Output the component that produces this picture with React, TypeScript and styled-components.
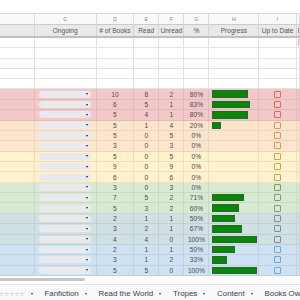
import React from 'react';
import styled, { createGlobalStyle } from 'styled-components';

const COLS = '34.5px 62.3px 37.3px 25.3px 25px 25px 50px 37.4px 1fr';
const EMPTY_LINE = '#e2e3e3';
const DATA_LINE = 'rgba(0, 0, 0, 0.07)';

type Group = { bg: string; box: string; rows: [number, number][] };

const groups: Group[] = [
	{ bg: '#f3c8c9', box: '#d86a6a', rows: [[10, 8], [6, 5], [5, 4]] },
	{ bg: '#fce5cd', box: '#d39a64', rows: [[5, 1], [5, 0], [3, 0]] },
	{ bg: '#fff2cc', box: '#c9a64a', rows: [[5, 0], [9, 0], [6, 0]] },
	{ bg: '#d9ead3', box: '#7f9c71', rows: [[3, 0], [7, 5], [5, 3]] },
	{ bg: '#d0e0e3', box: '#7b8d95', rows: [[2, 1], [3, 2], [4, 4]] },
	{ bg: '#cfe2f3', box: '#72a4d8', rows: [[2, 1], [3, 1], [5, 5]] },
];

const letters = ['', 'C', 'D', 'E', 'F', 'G', 'H', 'I', ''];
const headers = ['', 'Ongoing', '# of Books', 'Read', 'Unread', '%', 'Progress', 'Up to Date', 'B'];
const tabs = ['Fanfiction', 'Read the World', 'Tropes', 'Content', 'Books Owned'];

const BAR_MAX = 45.6;

const App: React.FC = () => (
	<>
		<GlobalStyle />
		<Sheet>
			<TopGap />
			<Row $h={11.5}>
				{letters.map((l, i) => (
					<LetterCell key={i}>{l}</LetterCell>
				))}
			</Row>
			<Row $h={11} $bg="#e9e9e9">
				{headers.map((h, i) => (
					<HeaderCell key={i} $left={i === 8}>
						{h}
					</HeaderCell>
				))}
			</Row>
			<FrozenLine />
			{[0, 1, 2, 3, 4].map((r) => (
				<Row key={r} $h={10.3}>
					{letters.map((_, i) => (
						<Cell key={i} $line={EMPTY_LINE}>
							{r === 0 && i === 8 && <PinkMark />}
						</Cell>
					))}
				</Row>
			))}
			{groups.map((g) =>
				g.rows.map(([total, read], r) => {
					const pct = Math.round((read / total) * 100);
					return (
						<Row key={`${g.bg}-${r}`} $h={10.37} $bg={g.bg}>
							<Cell $line={DATA_LINE} />
							<Cell $line={DATA_LINE}>
								<Chip>
									<Caret />
								</Chip>
							</Cell>
							<Cell $line={DATA_LINE}>{total}</Cell>
							<Cell $line={DATA_LINE}>{read}</Cell>
							<Cell $line={DATA_LINE}>{total - read}</Cell>
							<Cell $line={DATA_LINE}>{pct}%</Cell>
							<BarCell $line={DATA_LINE}>
								{pct > 0 && <Bar style={{ width: `${(pct / 100) * BAR_MAX}px` }} />}
							</BarCell>
							<Cell $line={DATA_LINE}>
								<CheckBox $color={g.box} />
							</Cell>
							<Cell $line={DATA_LINE} />
						</Row>
					);
				}),
			)}
			<ScrollArea>
				<Thumb />
			</ScrollArea>
			<TabBar>
				<StarTab>
					<Stars>☆☆☆☆☆</Stars>
					<TabCaret />
				</StarTab>
				{tabs.map((t) => (
					<Tab key={t}>
						{t}
						<TabCaret />
					</Tab>
				))}
			</TabBar>
		</Sheet>
	</>
);

export default App;

/**
 * Styled components
 */

const GlobalStyle = createGlobalStyle`
	html, body {
		margin: 0;
		padding: 0;
		background: #fff;
	}
	body {
		width: 300px;
		height: 300px;
		overflow: hidden;
		font-family: "Liberation Sans", Arial, sans-serif;
	}
`;

const Sheet = styled.div`
	width: 300px;
	height: 300px;
	display: flex;
	flex-direction: column;
	overflow: hidden;
	background: #fff;
`;

const TopGap = styled.div`
	flex: none;
	height: 13.5px;
	box-sizing: border-box;
	border-bottom: 1px solid #dadce0;
`;

const Row = styled.div<{ $h: number; $bg?: string }>`
	flex: none;
	display: grid;
	grid-template-columns: ${COLS};
	height: ${(p) => p.$h}px;
	background: ${(p) => p.$bg ?? '#fff'};
`;

const Cell = styled.div<{ $line: string }>`
	box-sizing: border-box;
	display: flex;
	align-items: center;
	justify-content: center;
	overflow: hidden;
	white-space: nowrap;
	border-right: 1px solid ${(p) => p.$line};
	border-bottom: 1px solid ${(p) => p.$line};
	font-size: 6.6px;
	color: #4a4a4a;
`;

const LetterCell = styled.div`
	box-sizing: border-box;
	display: flex;
	align-items: center;
	justify-content: center;
	background: #f8f9fa;
	border-right: 1px solid #dadce0;
	border-bottom: 1px solid #c9cacc;
	font-size: 5.4px;
	color: #80868b;
`;

const HeaderCell = styled.div<{ $left?: boolean }>`
	box-sizing: border-box;
	display: flex;
	align-items: center;
	justify-content: ${(p) => (p.$left ? 'flex-start' : 'center')};
	padding-left: ${(p) => (p.$left ? '1px' : '0')};
	overflow: hidden;
	white-space: nowrap;
	border-right: 1px solid #d4d4d4;
	font-size: 6.6px;
	color: #555;
`;

const FrozenLine = styled.div`
	flex: none;
	height: 2px;
	background: #bfbfbf;
	box-shadow: 0 0.5px 0 #dcdcdc;
`;

const PinkMark = styled.span`
	width: 4px;
	height: 7px;
	margin-left: 1px;
	background: #e8b4b4;
`;

const Chip = styled.span`
	box-sizing: border-box;
	width: 52.4px;
	height: 7px;
	border-radius: 3.5px;
	background: #e8eaed;
	display: flex;
	align-items: center;
	justify-content: flex-end;
	padding-right: 3px;
`;

const Caret = styled.span`
	width: 0;
	height: 0;
	border-left: 1.8px solid transparent;
	border-right: 1.8px solid transparent;
	border-top: 2.2px solid #202124;
`;

const BarCell = styled(Cell)`
	justify-content: flex-start;
	padding-left: 2.4px;
`;

const Bar = styled.span`
	box-sizing: border-box;
	height: 7.4px;
	background: #0c850c;
	border: 0.8px solid #226b22;
`;

const CheckBox = styled.span<{ $color: string }>`
	box-sizing: border-box;
	width: 7px;
	height: 7px;
	border: 1.2px solid ${(p) => p.$color};
	border-radius: 1px;
`;

const ScrollArea = styled.div`
	flex: none;
	height: 7.8px;
	box-sizing: border-box;
	padding-top: 2.3px;
`;

const Thumb = styled.div`
	width: 85px;
	height: 3px;
	border-radius: 0 2px 2px 0;
	background: #c6c6c6;
`;

const TabBar = styled.div`
	flex: none;
	height: 16px;
	box-sizing: border-box;
	border-top: 1px solid #e3e3e3;
	background: #f8f9fa;
	display: flex;
	align-items: center;
	padding-top: 3px;
	gap: 12px;
	white-space: nowrap;
	font-size: 7.9px;
	color: #3c4043;
`;

const StarTab = styled.div`
	flex: none;
	width: 32.5px;
	display: flex;
	align-items: center;
	justify-content: flex-end;
	gap: 6px;
	overflow: hidden;
`;

const Stars = styled.span`
	font-family: "DejaVu Sans", sans-serif;
	font-size: 5.4px;
	letter-spacing: 0.2px;
	color: #8a8a8a;
`;

const Tab = styled.div`
	flex: none;
	display: flex;
	align-items: center;
	gap: 5.8px;
`;

const TabCaret = styled.span`
	width: 0;
	height: 0;
	border-left: 1.8px solid transparent;
	border-right: 1.8px solid transparent;
	border-top: 2.2px solid #3c4043;
`;
